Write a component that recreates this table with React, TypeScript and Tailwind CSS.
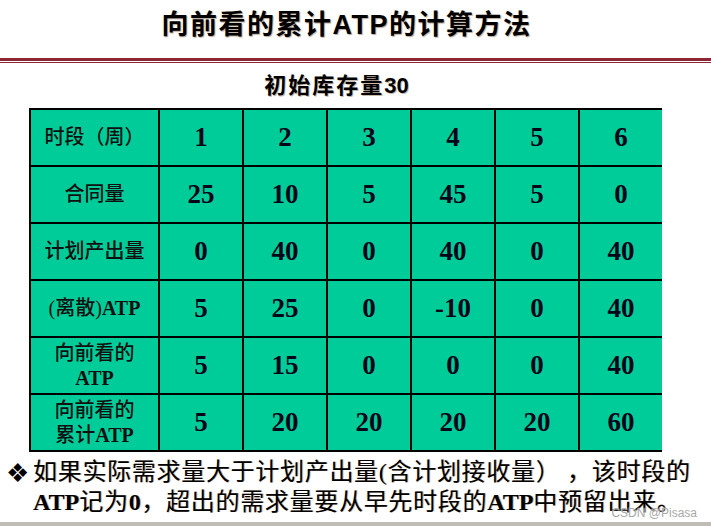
import React from 'react';

const serif = "font-['Liberation_Serif','Noto_Sans_CJK_SC',serif]";

const rows: { label: React.ReactNode; values: string[] }[] = [
  { label: '时段（周）', values: ['1', '2', '3', '4', '5', '6'] },
  { label: '合同量', values: ['25', '10', '5', '45', '5', '0'] },
  { label: '计划产出量', values: ['0', '40', '0', '40', '0', '40'] },
  {
    label: (
      <>
        (离散)<b className="font-bold">ATP</b>
      </>
    ),
    values: ['5', '25', '0', '-10', '0', '40'],
  },
  {
    label: (
      <>
        向前看的
        <br />
        <b className="font-bold">ATP</b>
      </>
    ),
    values: ['5', '15', '0', '0', '0', '40'],
  },
  {
    label: (
      <>
        向前看的
        <br />
        累计<b className="font-bold">ATP</b>
      </>
    ),
    values: ['5', '20', '20', '20', '20', '60'],
  },
];

const AtpTable = () => (
  <div className="ml-[29px] w-[633px] grid grid-cols-[127px_repeat(6,82px)] auto-rows-[55px] gap-[2px] bg-black p-[2px]">
    {rows.map((row, i) => (
      <React.Fragment key={i}>
        <div
          className={`bg-[#00cc99] flex items-center justify-center text-center text-[20px] leading-[25px] font-medium text-[#101010] ${serif}`}
        >
          <span>{row.label}</span>
        </div>
        {row.values.map((v, j) => (
          <div
            key={j}
            className={`bg-[#00cc99] flex items-center justify-center text-[27px] font-bold text-[#05051a] ${serif}`}
          >
            {v}
          </div>
        ))}
      </React.Fragment>
    ))}
  </div>
);

export default function App() {
  return (
    <div className="relative w-[711px] h-[526px] bg-white overflow-hidden flex flex-col">
      <div className="h-[50px] flex items-center justify-center pt-[1px] pr-[18px]">
        <h1 className="text-[27px] font-bold tracking-[1.5px] text-black font-['Liberation_Sans','Noto_Sans_CJK_SC',sans-serif] [text-shadow:1px_1px_1px_#b8a898]">
          向前看的累计ATP的计算方法
        </h1>
      </div>
      <div className="mt-[8px] h-[3px] bg-[#8c2636]" />
      <div className="mt-[1px] h-[1px] bg-[#8c2636]" />
      <div className="h-[45px] flex items-center justify-center pr-[38px]">
        <span className="text-[22px] font-bold tracking-[2px] text-black font-['Liberation_Sans','Noto_Sans_CJK_SC',sans-serif] [text-shadow:1px_1px_0_#c8b8a8]">
          初始库存量<span className="tracking-normal">30</span>
        </span>
      </div>
      <AtpTable />
      <div className="flex pl-[6px] pt-[5px]">
        <span className="w-[27px] pt-[4px] text-[26px] leading-[24px] font-['DejaVu_Sans',sans-serif]">❖</span>
        <p className={`text-[24px] leading-[30px] tracking-[0.7px] text-black ${serif} [text-shadow:1px_0_0_#c9b39a]`}>
          如果实际需求量大于计划产出量(含计划接收量） ，该时段的
          <br />
          <b className="font-bold tracking-normal">ATP</b>记为<b className="font-bold">0</b>，超出的需求量要从早先时段的
          <b className="font-bold tracking-normal">ATP</b>中预留出来。
        </p>
      </div>
      <div className="absolute left-0 right-0 bottom-0 h-[4px] bg-[#bfbcb5]" />
      <span className="absolute right-[14px] bottom-[7px] text-[12px] leading-[12px] text-[#a8a8a8] font-['Liberation_Sans',sans-serif] [text-shadow:0_0_2px_#ffffff]">
        CSDN @Pisasa
      </span>
    </div>
  );
}
